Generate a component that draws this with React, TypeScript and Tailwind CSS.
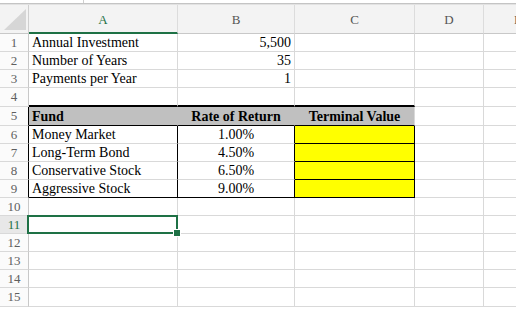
import React from "react";

type Cell = {
  text?: string;
  cls?: string; // extra classes (alignment, bg, font)
  r?: string; // right border color class
  b?: string; // bottom border color class
};

const G_R = "border-r-[#d9d9d9]";
const G_B = "border-b-[#d9d9d9]";

const widths = ["w-[149px]", "w-[117px]", "w-[120px]", "w-[69px]", "w-[69px]"];

const rows: { h: string; cells: Cell[] }[] = [
  { h: "h-[18px]", cells: [{ text: "Annual Investment" }, { text: "5,500", cls: "justify-end" }, {}, {}, {}] },
  { h: "h-[18px]", cells: [{ text: "Number of Years" }, { text: "35", cls: "justify-end" }, {}, {}, {}] },
  { h: "h-[18px]", cells: [{ text: "Payments per Year" }, { text: "1", cls: "justify-end" }, {}, {}, {}] },
  {
    h: "h-[19px]",
    cells: [
      { cls: "border-b-2", b: "border-b-black" },
      { cls: "border-b-2", b: "border-b-black" },
      { cls: "border-b-2", b: "border-b-black" },
      {},
      {},
    ],
  },
  {
    h: "h-[19px]",
    cells: [
      { text: "Fund", cls: "bg-[#c0c0c0] font-bold", r: "border-r-[#c0c0c0]", b: "border-b-black" },
      { text: "Rate of Return", cls: "bg-[#c0c0c0] font-bold justify-center", r: "border-r-[#c0c0c0]", b: "border-b-black" },
      { text: "Terminal Value", cls: "bg-[#c0c0c0] font-bold justify-center", b: "border-b-black" },
      {},
      {},
    ],
  },
  {
    h: "h-[18px]",
    cells: [
      { text: "Money Market", r: "border-r-black" },
      { text: "1.00%", cls: "justify-center", r: "border-r-black" },
      { cls: "bg-[#ffff00]", r: "border-r-black", b: "border-b-black" },
      {},
      {},
    ],
  },
  {
    h: "h-[18px]",
    cells: [
      { text: "Long-Term Bond", r: "border-r-black" },
      { text: "4.50%", cls: "justify-center", r: "border-r-black" },
      { cls: "bg-[#ffff00]", r: "border-r-black", b: "border-b-black" },
      {},
      {},
    ],
  },
  {
    h: "h-[18px]",
    cells: [
      { text: "Conservative Stock", r: "border-r-black" },
      { text: "6.50%", cls: "justify-center", r: "border-r-black" },
      { cls: "bg-[#ffff00]", r: "border-r-black", b: "border-b-black" },
      {},
      {},
    ],
  },
  {
    h: "h-[18px]",
    cells: [
      { text: "Aggressive Stock", r: "border-r-black", b: "border-b-black" },
      { text: "9.00%", cls: "justify-center", r: "border-r-black", b: "border-b-black" },
      { cls: "bg-[#ffff00]", r: "border-r-black", b: "border-b-black" },
      {},
      {},
    ],
  },
  { h: "h-[18px]", cells: [{}, {}, {}, {}, {}] },
  { h: "h-[18px]", cells: [{ cls: "relative overflow-visible" }, {}, {}, {}, {}] },
  { h: "h-[18px]", cells: [{}, {}, {}, {}, {}] },
  { h: "h-[18px]", cells: [{}, {}, {}, {}, {}] },
  { h: "h-[18px]", cells: [{}, {}, {}, {}, {}] },
  { h: "h-[19px]", cells: [{}, {}, {}, {}, {}] },
];

const blackLeftRows = [5, 6, 7, 8, 9];

export default function App() {
  return (
    <div className="w-[516px] h-[310px] overflow-hidden bg-white font-['Liberation_Serif','Times_New_Roman',serif] text-[14px] text-black">
      {/* top strip */}
      <div className="relative h-[3px] bg-white">
        <div className="absolute left-[83px] top-0 h-[3px] w-px bg-[#cfcfcf]" />
      </div>
      <div className="h-px bg-[#c4c4c4]" />
      <div className="h-px bg-[#e2e2e2]" />
      {/* column headers */}
      <div className="flex h-[29px] bg-[#f3f3f3]">
        <div className="w-[29px] shrink-0 border-r border-b border-r-[#cfcfcf] border-b-[#c8c8c8] flex items-end justify-end pr-[2px] pb-[3px]">
          <svg width="22" height="21" viewBox="0 0 22 21">
            <polygon points="22,0 22,21 0,21" fill="#d6d6d6" />
          </svg>
        </div>
        {["A", "B", "C", "D", "E"].map((l, i) => (
          <div
            key={l}
            className={`${widths[i]} shrink-0 border-r border-r-[#dcdcdc] flex items-center justify-center text-[13px] pt-[2px] ${
              i === 0 ? "border-b-2 border-b-[#1e7145] text-[#1e7145]" : "border-b border-b-[#c8c8c8] text-[#555555]"
            }`}
          >
            {l}
          </div>
        ))}
      </div>
      {/* rows */}
      {rows.map((row, ri) => {
        const n = ri + 1;
        const selected = n === 11;
        return (
          <div key={n} className={`flex ${row.h}`}>
            <div
              className={`w-[29px] shrink-0 border-r border-b border-b-[#d9d9d9] flex items-center justify-center text-[13px] ${
                blackLeftRows.includes(n) ? "border-r-black" : "border-r-[#c8c8c8]"
              } ${selected ? "bg-[#e8e8e8] text-[#1e7145]" : "bg-[#fbfbfb] text-[#5f5f5f]"}`}
            >
              {n}
            </div>
            {row.cells.map((c, ci) => (
              <div
                key={ci}
                className={`${widths[ci]} shrink-0 border-r border-b ${c.r ?? G_R} ${c.b ?? G_B} px-[3px] flex items-center whitespace-nowrap ${
                  c.cls ?? ""
                } ${c.cls && c.cls.includes("relative") ? "" : "overflow-hidden"}`}
              >
                {c.text}
                {selected && ci === 0 && (
                  <>
                    <div className="absolute left-[-2px] top-[-1px] right-[-1px] bottom-[-1px] border-2 border-[#1e7145] z-10" />
                    <div className="absolute right-[-4px] bottom-[-4px] w-[6px] h-[6px] bg-[#1e7145] border border-white box-content z-20" />
                  </>
                )}
              </div>
            ))}
          </div>
        );
      })}
    </div>
  );
}
